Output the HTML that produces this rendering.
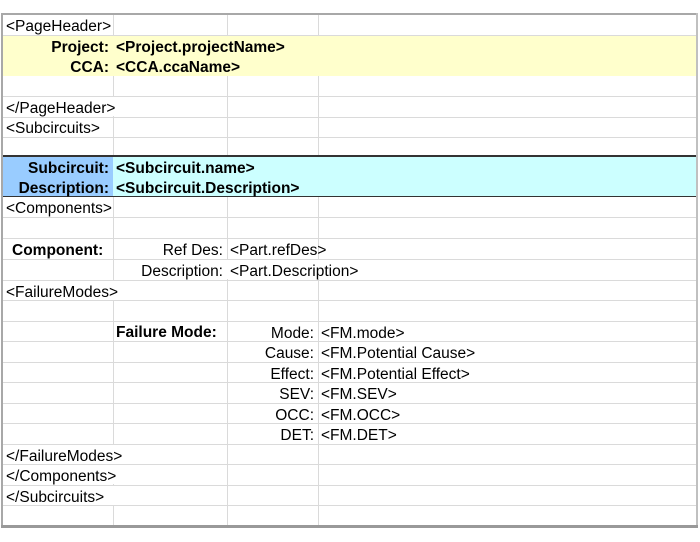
<!DOCTYPE html>
<html><head><meta charset="utf-8"><style>
html,body{margin:0;padding:0;background:#fff;width:700px;height:542px;overflow:hidden;position:relative;font-family:"Liberation Sans",Arial,sans-serif;}
.h{position:absolute;left:2px;width:695px;height:1px;background:#dadada;}
.v{position:absolute;width:1px;background:#dadada;top:15px;height:511px;}
.t{position:absolute;height:20px;line-height:20px;font-size:15.5px;white-space:nowrap;color:#000;box-sizing:border-box;padding-top:2px;}
.r{text-align:right;padding-right:4px;}
.l{padding-left:3px;}
.b{font-weight:bold;}
.w{background:#fff;}
</style></head><body>
<div class="h" style="top:35px"></div>
<div class="h" style="top:96px"></div>
<div class="h" style="top:117px"></div>
<div class="h" style="top:137px"></div>
<div class="h" style="top:217px"></div>
<div class="h" style="top:238px"></div>
<div class="h" style="top:259px"></div>
<div class="h" style="top:280px"></div>
<div class="h" style="top:300px"></div>
<div class="h" style="top:321px"></div>
<div class="h" style="top:341px"></div>
<div class="h" style="top:362px"></div>
<div class="h" style="top:382px"></div>
<div class="h" style="top:403px"></div>
<div class="h" style="top:423px"></div>
<div class="h" style="top:444px"></div>
<div class="h" style="top:464px"></div>
<div class="h" style="top:485px"></div>
<div class="h" style="top:505px"></div>
<div class="v" style="left:113px"></div>
<div class="v" style="left:227px"></div>
<div class="v" style="left:318px"></div>
<div style="position:absolute;left:2px;top:36px;width:695px;height:40px;background:#ffffcc;"></div>
<div style="position:absolute;left:2px;top:155px;width:695px;height:42px;box-sizing:border-box;border-top:2px solid #333;border-bottom:1px solid #333;border-left:1px solid #333;background:#ccffff;"></div>
<div style="position:absolute;left:3px;top:157px;width:110px;height:39px;background:#99ccff;"></div>
<div style="position:absolute;left:1px;top:13px;width:697px;height:2px;background:#a8a8a8;"></div>
<div style="position:absolute;left:1px;top:13px;width:2px;height:515px;background:#a8a8a8;"></div>
<div style="position:absolute;left:696px;top:13px;width:2px;height:515px;background:#c0c0c0;"></div>
<div style="position:absolute;left:1px;top:525px;width:697px;height:3px;background:#999;"></div>

<div class="t l" style="left:3px;top:15px">&lt;PageHeader&gt;</div>
<div class="t r b" style="left:3px;width:110px;top:36px">Project:</div>
<div class="t l b" style="left:113px;top:36px">&lt;Project.projectName&gt;</div>
<div class="t r b" style="left:3px;width:110px;top:56px">CCA:</div>
<div class="t l b" style="left:113px;top:56px">&lt;CCA.ccaName&gt;</div>
<div class="t l w" style="left:3px;width:223px;top:97px;height:19px">&lt;/PageHeader&gt;</div>
<div class="t l" style="left:3px;top:117px">&lt;Subcircuits&gt;</div>
<div class="t r b" style="left:3px;width:110px;top:157px">Subcircuit:</div>
<div class="t l b" style="left:113px;top:157px">&lt;Subcircuit.name&gt;</div>
<div class="t r b" style="left:3px;width:110px;top:177px">Description:</div>
<div class="t l b" style="left:113px;top:177px">&lt;Subcircuit.Description&gt;</div>
<div class="t l w" style="left:3px;width:110px;top:197px">&lt;Components&gt;</div>
<div class="t b" style="left:12px;top:239px;line-height:19px">Component:</div>
<div class="t r" style="left:114px;width:113px;top:239px">Ref Des:</div>
<div class="t l" style="left:227px;top:239px">&lt;Part.refDes&gt;</div>
<div class="t r" style="left:114px;width:113px;top:260px">Description:</div>
<div class="t l w" style="left:227px;width:200px;top:260px;height:19px">&lt;Part.Description&gt;</div>
<div class="t l w" style="left:3px;width:223px;top:281px;height:19px">&lt;FailureModes&gt;</div>
<div class="t b" style="left:116px;top:321px;line-height:19px">Failure Mode:</div>
<div class="t r" style="left:228px;width:90px;top:322px">Mode:</div>
<div class="t l" style="left:318px;top:322px">&lt;FM.mode&gt;</div>
<div class="t r" style="left:228px;width:90px;top:342px">Cause:</div>
<div class="t l" style="left:318px;top:342px">&lt;FM.Potential Cause&gt;</div>
<div class="t r" style="left:228px;width:90px;top:363px">Effect:</div>
<div class="t l" style="left:318px;top:363px">&lt;FM.Potential Effect&gt;</div>
<div class="t r" style="left:228px;width:90px;top:383px">SEV:</div>
<div class="t l" style="left:318px;top:383px">&lt;FM.SEV&gt;</div>
<div class="t r" style="left:228px;width:90px;top:404px">OCC:</div>
<div class="t l" style="left:318px;top:404px">&lt;FM.OCC&gt;</div>
<div class="t r" style="left:228px;width:90px;top:424px">DET:</div>
<div class="t l" style="left:318px;top:424px">&lt;FM.DET&gt;</div>
<div class="t l w" style="left:3px;width:223px;top:445px;height:19px">&lt;/FailureModes&gt;</div>
<div class="t l w" style="left:3px;width:223px;top:465px;height:19px">&lt;/Components&gt;</div>
<div class="t l w" style="left:3px;width:223px;top:486px;height:19px">&lt;/Subcircuits&gt;</div>
</body></html>
